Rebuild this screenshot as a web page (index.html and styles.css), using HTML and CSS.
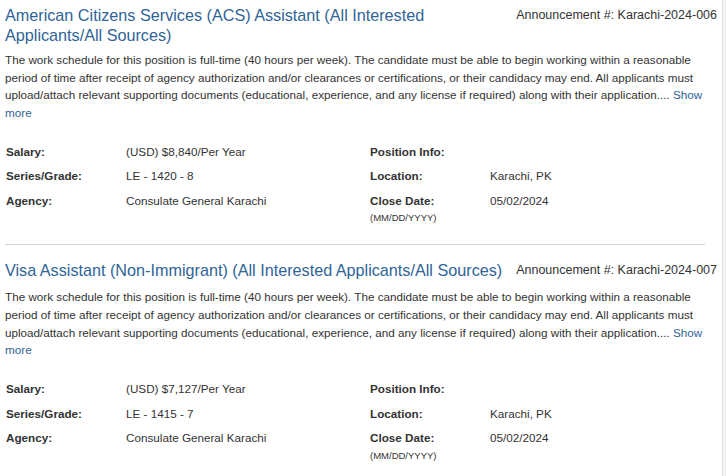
FILE: index.html
```html
<!DOCTYPE html>
<html>
<head>
<meta charset="utf-8">
<link rel="stylesheet" href="styles.css">
</head>
<body>
<div class="page">
  <div class="list">
    <div class="job">
      <div class="job-head">
        <a class="job-title">American Citizens Services (ACS) Assistant (All Interested Applicants/All Sources)</a>
        <div class="announce">Announcement #: Karachi-2024-006</div>
      </div>
      <p class="summary">The work schedule for this position is full-time (40 hours per week). The candidate must be able to begin working within a reasonable period of time after receipt of agency authorization and/or clearances or certifications, or their candidacy may end. All applicants must upload/attach relevant supporting documents (educational, experience, and any license if required) along with their application.... <a class="more">Show more</a></p>
      <div class="details">
        <div class="lbl">Salary:</div><div class="val">(USD) $8,840/Per Year</div>
        <div class="lbl">Position Info:</div><div class="val"></div>
        <div class="lbl">Series/Grade:</div><div class="val">LE - 1420 - 8</div>
        <div class="lbl">Location:</div><div class="val">Karachi, PK</div>
        <div class="lbl">Agency:</div><div class="val">Consulate General Karachi</div>
        <div class="lbl">Close Date:<span class="fmt">(MM/DD/YYYY)</span></div><div class="val">05/02/2024</div>
      </div>
    </div>
    <div class="job second">
      <div class="job-head">
        <a class="job-title">Visa Assistant (Non-Immigrant) (All Interested Applicants/All Sources)</a>
        <div class="announce">Announcement #: Karachi-2024-007</div>
      </div>
      <p class="summary">The work schedule for this position is full-time (40 hours per week). The candidate must be able to begin working within a reasonable period of time after receipt of agency authorization and/or clearances or certifications, or their candidacy may end. All applicants must upload/attach relevant supporting documents (educational, experience, and any license if required) along with their application.... <a class="more">Show more</a></p>
      <div class="details">
        <div class="lbl">Salary:</div><div class="val">(USD) $7,127/Per Year</div>
        <div class="lbl">Position Info:</div><div class="val"></div>
        <div class="lbl">Series/Grade:</div><div class="val">LE - 1415 - 7</div>
        <div class="lbl">Location:</div><div class="val">Karachi, PK</div>
        <div class="lbl">Agency:</div><div class="val">Consulate General Karachi</div>
        <div class="lbl">Close Date:<span class="fmt">(MM/DD/YYYY)</span></div><div class="val">05/02/2024</div>
      </div>
    </div>
  </div>
  <div class="edge"></div>
</div>
</body>
</html>
```
FILE: styles.css
```css
html, body {
  margin: 0;
  padding: 0;
  background: #fff;
}
body {
  font-family: "Liberation Sans", Arial, sans-serif;
  color: #333;
  font-size: 11.7px;
}
.page {
  display: flex;
  width: 726px;
  height: 476px;
  overflow: hidden;
}
.list {
  width: 700px;
  padding-left: 5px;
  flex: none;
}
.edge {
  margin-left: auto;
  width: 3px;
  border-left: 1px solid #e2e2e2;
  background: #f4f4f4;
}
.job {
  padding-top: 5px;
  border-bottom: 1px solid #d4d4d4;
  padding-bottom: 21px;
}
.job.second {
  padding-top: 15px;
  border-bottom: none;
}
.job-head {
  display: flex;
  align-items: flex-start;
  margin-right: -12px;
}
.job-title {
  flex: 1;
  font-size: 16.2px;
  line-height: 20px;
  color: #2f6497;
}
.announce {
  flex: none;
  margin-left: 12px;
  font-size: 12.5px;
  line-height: 20px;
  color: #333;
}
.summary {
  margin: 6px 0 0;
  line-height: 17.7px;
}
.second .summary {
  margin-top: 8px;
}
.more {
  color: #2f6497;
}
.details {
  margin-top: 18px;
  display: grid;
  grid-template-columns: 121px 243px 121px 1fr;
  line-height: 24.5px;
}
.lbl {
  font-weight: bold;
  padding-left: 1px;
}
.fmt {
  display: block;
  font-weight: normal;
  font-size: 9.5px;
  line-height: 10px;
}
```
